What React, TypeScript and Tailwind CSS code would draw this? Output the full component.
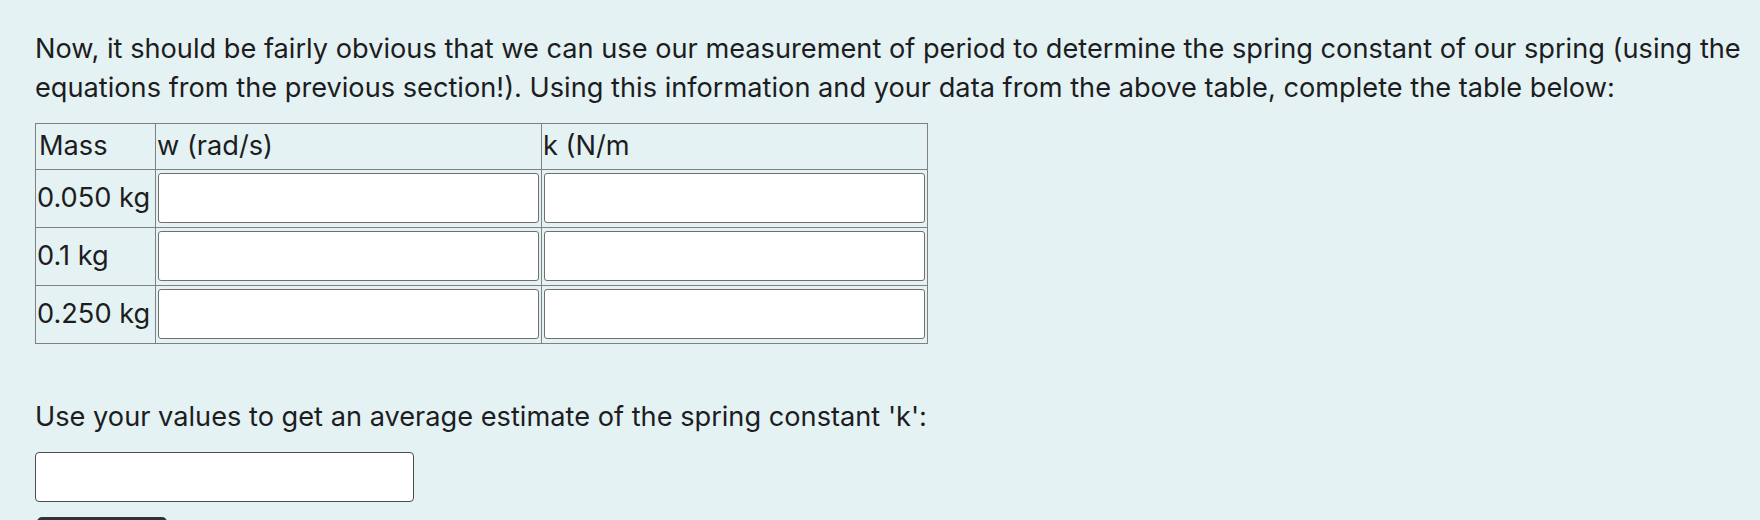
export default function App() {
  const rows = ["0.050 kg", "0.1 kg", "0.250 kg"];

  return (
    <div
      className="w-[1760px] h-[520px] overflow-hidden bg-[#e4f2f3] text-[#1d1d1f] pt-[29px] pl-[35px]"
      style={{ fontFamily: "Inter, 'Noto Sans', sans-serif" }}
    >
      <p className="text-[27.2px] leading-[39.4px] w-[1725px] whitespace-nowrap">
        Now, it should be fairly obvious that we can use our measurement of period to determine the spring constant of our spring (using the
        <br />
        equations from the previous section!). Using this information and your data from the above table, complete the table below:
      </p>

      <table className="mt-[15px] border-collapse border border-[#808080] text-[27.2px] leading-[38.4px]">
        <thead>
          <tr className="h-[46px]">
            <td className="w-[120px] border border-[#808080] px-[3px] align-middle">Mass</td>
            <td className="w-[386px] border border-[#808080] px-[1px] align-middle">w (rad/s)</td>
            <td className="w-[386px] border border-[#808080] px-[1px] align-middle">k (N/m</td>
          </tr>
        </thead>
        <tbody>
          {rows.map((m) => (
            <tr key={m} className="h-[58px]">
              <td className="border border-[#808080] px-[1px] align-middle whitespace-nowrap">{m}</td>
              <td className="border border-[#808080] p-[2px]">
                <input type="text" className="block w-full h-[50px] bg-white border border-[#6f6f6f] rounded-[3px] outline-none" />
              </td>
              <td className="border border-[#808080] p-[2px]">
                <input type="text" className="block w-full h-[50px] bg-white border border-[#6f6f6f] rounded-[3px] outline-none" />
              </td>
            </tr>
          ))}
        </tbody>
      </table>

      <p className="mt-[54px] text-[27.2px] leading-[38.4px]">
        Use your values to get an average estimate of the spring constant 'k':
      </p>

      <input
        type="text"
        className="block mt-[16px] w-[379px] h-[50px] bg-white border-[1.5px] border-[#4d4d4d] rounded-[4px] outline-none"
      />

      <div className="mt-[15px] ml-[2px] w-[130px] h-[44px] rounded-[5px] bg-[#333]" />
    </div>
  );
}
